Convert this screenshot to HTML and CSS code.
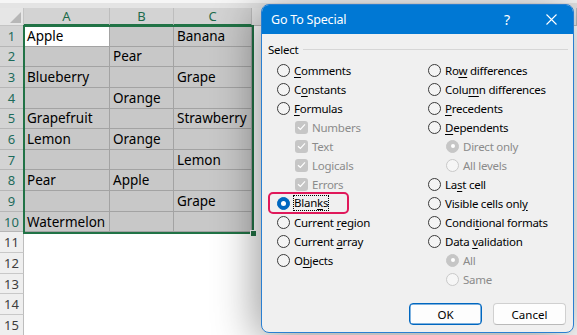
FILE: index.html
```html
<!DOCTYPE html>
<html>
<head>
<meta charset="utf-8">
<link rel="stylesheet" href="styles.css">
</head>
<body>
<div class="sheet">
  <div class="topband"></div>
  <div class="grid">
    <div class="corner"><span class="tri"></span></div>
    <div class="ch sel">A</div><div class="ch sel">B</div><div class="ch sel">C</div><div class="ch">&nbsp;</div>

    <div class="rh sel">1</div><div class="c active">Apple</div><div class="c sel"></div><div class="c sel">Banana</div><div class="c"></div>
    <div class="rh sel">2</div><div class="c sel"></div><div class="c sel">Pear</div><div class="c sel"></div><div class="c"></div>
    <div class="rh sel">3</div><div class="c sel">Blueberry</div><div class="c sel"></div><div class="c sel">Grape</div><div class="c"></div>
    <div class="rh sel">4</div><div class="c sel"></div><div class="c sel">Orange</div><div class="c sel"></div><div class="c"></div>
    <div class="rh sel">5</div><div class="c sel">Grapefruit</div><div class="c sel"></div><div class="c sel">Strawberry</div><div class="c"></div>
    <div class="rh sel">6</div><div class="c sel">Lemon</div><div class="c sel">Orange</div><div class="c sel"></div><div class="c"></div>
    <div class="rh sel">7</div><div class="c sel"></div><div class="c sel"></div><div class="c sel">Lemon</div><div class="c"></div>
    <div class="rh sel">8</div><div class="c sel">Pear</div><div class="c sel">Apple</div><div class="c sel"></div><div class="c"></div>
    <div class="rh sel">9</div><div class="c sel"></div><div class="c sel"></div><div class="c sel">Grape</div><div class="c"></div>
    <div class="rh sel">10</div><div class="c sel">Watermelon</div><div class="c sel"></div><div class="c sel"></div><div class="c"></div>
    <div class="rh">11</div><div class="c"></div><div class="c"></div><div class="c"></div><div class="c"></div>
    <div class="rh">12</div><div class="c"></div><div class="c"></div><div class="c"></div><div class="c"></div>
    <div class="rh">13</div><div class="c"></div><div class="c"></div><div class="c"></div><div class="c"></div>
    <div class="rh">14</div><div class="c"></div><div class="c"></div><div class="c"></div><div class="c"></div>
    <div class="rh">15</div><div class="c"></div><div class="c"></div><div class="c"></div><div class="c"></div>
  </div>
  <div class="selbox"><span class="handle"></span></div>
</div>

<div class="dialog">
  <div class="titlebar">
    <span class="title">Go To Special</span>
    <span class="tbtn help">?</span>
    <span class="tbtn close"><svg width="11" height="11" viewBox="0 0 11 11"><path d="M0.5 0.5L10.5 10.5M10.5 0.5L0.5 10.5" stroke="#fff" stroke-width="1.1" fill="none"/></svg></span>
  </div>
  <div class="body">
    <div class="legend"><span>Select</span><span class="rule"></span></div>
    <div class="options">
      <div class="col">
        <div class="opt"><span class="radio"></span><span><u>C</u>omments</span></div>
        <div class="opt"><span class="radio"></span><span>C<u>o</u>nstants</span></div>
        <div class="opt"><span class="radio"></span><span><u>F</u>ormulas</span></div>
        <div class="opt sub dis"><span class="check"><svg width="9" height="8" viewBox="0 0 9 8"><path d="M1 4.2L3.4 6.5L8 1.3" stroke="#fff" stroke-width="1.2" fill="none"/></svg></span><span>Numbers</span></div>
        <div class="opt sub dis"><span class="check"><svg width="9" height="8" viewBox="0 0 9 8"><path d="M1 4.2L3.4 6.5L8 1.3" stroke="#fff" stroke-width="1.2" fill="none"/></svg></span><span>Text</span></div>
        <div class="opt sub dis"><span class="check"><svg width="9" height="8" viewBox="0 0 9 8"><path d="M1 4.2L3.4 6.5L8 1.3" stroke="#fff" stroke-width="1.2" fill="none"/></svg></span><span>Logicals</span></div>
        <div class="opt sub dis"><span class="check"><svg width="9" height="8" viewBox="0 0 9 8"><path d="M1 4.2L3.4 6.5L8 1.3" stroke="#fff" stroke-width="1.2" fill="none"/></svg></span><span>Errors</span></div>
        <div class="opt marked"><span class="radio on"></span><span class="focus">Blan<u>k</u>s</span></div>
        <div class="opt"><span class="radio"></span><span>Current <u>r</u>egion</span></div>
        <div class="opt"><span class="radio"></span><span>Current <u>a</u>rray</span></div>
        <div class="opt"><span class="radio"></span><span>O<u>b</u>jects</span></div>
      </div>
      <div class="col">
        <div class="opt"><span class="radio"></span><span>Ro<u>w</u> differences</span></div>
        <div class="opt"><span class="radio"></span><span>Colu<u>m</u>n differences</span></div>
        <div class="opt"><span class="radio"></span><span><u>P</u>recedents</span></div>
        <div class="opt"><span class="radio"></span><span><u>D</u>ependents</span></div>
        <div class="opt sub dis"><span class="radio dison"></span><span>Direct only</span></div>
        <div class="opt sub dis"><span class="radio disoff"></span><span>All levels</span></div>
        <div class="opt"><span class="radio"></span><span>La<u>s</u>t cell</span></div>
        <div class="opt"><span class="radio"></span><span>Visible cells onl<u>y</u></span></div>
        <div class="opt"><span class="radio"></span><span>Condi<u>t</u>ional formats</span></div>
        <div class="opt"><span class="radio"></span><span>Data <u>v</u>alidation</span></div>
        <div class="opt sub dis"><span class="radio dison"></span><span>All</span></div>
        <div class="opt sub dis"><span class="radio disoff"></span><span>Same</span></div>
      </div>
    </div>
    <div class="buttons">
      <span class="btn default">OK</span>
      <span class="btn">Cancel</span>
    </div>
  </div>
</div>
</body>
</html>
```
FILE: styles.css
```css
html, body {
  margin: 0;
  padding: 0;
}
body {
  width: 577px;
  height: 335px;
  overflow: hidden;
  background: #fff;
  position: relative;
  font-family: "Noto Sans", sans-serif;
}
.sheet {
  position: relative;
}
.topband {
  height: 8px;
  background: linear-gradient(#f6f6f6 0 3px, #e4e4e4 3px);
}
.grid {
  display: grid;
  grid-template-columns: 24px 86px 64px 78px 1fr;
  grid-template-rows: 18px repeat(15, 20.65px);
}
.grid > div {
  box-sizing: border-box;
}
.corner {
  background: #e6e6e6;
  border-right: 1px solid #c4c4c4;
  border-bottom: 1px solid #c4c4c4;
  position: relative;
}
.tri {
  position: absolute;
  right: 2px;
  bottom: 2px;
  width: 0;
  height: 0;
  border-left: 11px solid transparent;
  border-bottom: 11px solid #b7b7b7;
}
.ch {
  background: #e6e6e6;
  border-right: 1px solid #bdbdbd;
  border-bottom: 1px solid #bdbdbd;
  font-size: 13px;
  color: #444;
  display: flex;
  align-items: center;
  justify-content: center;
}
.ch.sel {
  background: #d3d3d3;
  color: #1d6b4b;
  border-bottom: 2px solid #217346;
}
.rh {
  background: #efefef;
  border-right: 1px solid #bdbdbd;
  border-bottom: 1px solid #c8c8c8;
  font-size: 13px;
  color: #3d3d3d;
  display: flex;
  align-items: center;
  justify-content: center;
}
.rh.sel {
  background: #d3d3d3;
  color: #1d6b5b;
  border-bottom-color: #b6b6b6;
}
.c {
  font-size: 13.5px;
  color: #000;
  padding-left: 3px;
  display: flex;
  align-items: center;
  white-space: nowrap;
  overflow: hidden;
  background: #fff;
}
.c.sel {
  background: #c8c8c8;
  border-right: 1px solid #a3a3a3;
  border-bottom: 1px solid #a3a3a3;
}
.c.active {
  background: #fff;
  border-right: 1px solid #a3a3a3;
  border-bottom: 1px solid #a3a3a3;
}
.selbox {
  position: absolute;
  left: 23px;
  top: 25px;
  width: 231px;
  height: 209px;
  border: 2px solid #217346;
  box-sizing: border-box;
}
.handle {
  position: absolute;
  right: -5px;
  bottom: -5px;
  width: 5px;
  height: 5px;
  background: #217346;
  border: 1px solid #fff;
}

/* dialog */
.dialog {
  position: absolute;
  left: 261px;
  top: 4px;
  width: 313px;
  height: 329px;
  box-sizing: border-box;
  border: 1px solid #2a7fd1;
  border-radius: 8px;
  background: #f0f0f0;
  box-shadow: -4px 6px 44px rgba(0, 0, 0, 0.42);
  overflow: hidden;
}
.titlebar {
  height: 29px;
  background: #0078d4;
  display: flex;
  align-items: center;
  color: #fff;
}
.title {
  flex: 1;
  padding-left: 9px;
  font-size: 12.5px;
  letter-spacing: -0.2px;
}
.tbtn {
  width: 44px;
  height: 29px;
  display: flex;
  align-items: center;
  justify-content: center;
}
.help {
  font-size: 14px;
}
.body {
  padding: 7px 5px 0 6px;
  font-size: 11.5px;
  letter-spacing: -0.25px;
  color: #000;
}
.legend {
  height: 16px;
  display: flex;
  align-items: center;
}
.rule {
  flex: 1;
  height: 1px;
  background: #d6d6d6;
  margin-left: 5px;
}
.options {
  margin-top: 3.5px;
  margin-left: 9px;
  display: grid;
  grid-template-columns: 151px 1fr;
}
.opt {
  height: 19px;
  display: flex;
  align-items: center;
  gap: 4px;
  white-space: nowrap;
  position: relative;
}
.opt u {
  text-decoration-thickness: 1px;
  text-underline-offset: 2px;
}
.opt.sub {
  padding-left: 18px;
}
.opt.dis {
  color: #8b8b8b;
}
.radio {
  width: 13px;
  height: 13px;
  box-sizing: border-box;
  border: 1px solid #3a3a3a;
  border-radius: 50%;
  flex: none;
  position: relative;
  background: #f4f4f4;
}
.radio.on {
  background: #0067c0;
  border-color: #0067c0;
}
.radio.on::after {
  content: "";
  position: absolute;
  left: 3px;
  top: 3px;
  width: 5px;
  height: 5px;
  border-radius: 50%;
  background: #fff;
}
.radio.dison {
  background: #c6c6c6;
  border-color: #c6c6c6;
}
.radio.dison::after {
  content: "";
  position: absolute;
  left: 3.5px;
  top: 3.5px;
  width: 4px;
  height: 4px;
  border-radius: 50%;
  background: #fff;
}
.radio.disoff {
  border-color: #c9c9c9;
  background: #f6f6f6;
}
.check {
  width: 13px;
  height: 13px;
  border-radius: 3px;
  background: #c6c6c6;
  flex: none;
  display: flex;
  align-items: center;
  justify-content: center;
}
.focus {
  outline: 1px dotted #000;
  outline-offset: 0;
  line-height: 14px;
}
.marked::before {
  content: "";
  position: absolute;
  left: -9px;
  top: -1.5px;
  width: 81px;
  height: 22px;
  box-sizing: border-box;
  border: 2px solid #e0185a;
  border-radius: 5px;
}
.buttons {
  margin-top: 14.5px;
  margin-right: 2px;
  display: flex;
  justify-content: flex-end;
  gap: 11px;
}
.btn {
  width: 73px;
  height: 22px;
  box-sizing: border-box;
  border: 1px solid #d0d0d0;
  border-bottom-color: #b9b9b9;
  border-radius: 4px;
  background: #fdfdfd;
  display: flex;
  align-items: center;
  justify-content: center;
  letter-spacing: 0;
}
.btn.default {
  border: 1px solid #0067c0;
  box-shadow: inset 0 0 0 0.5px #0067c0;
}
```
